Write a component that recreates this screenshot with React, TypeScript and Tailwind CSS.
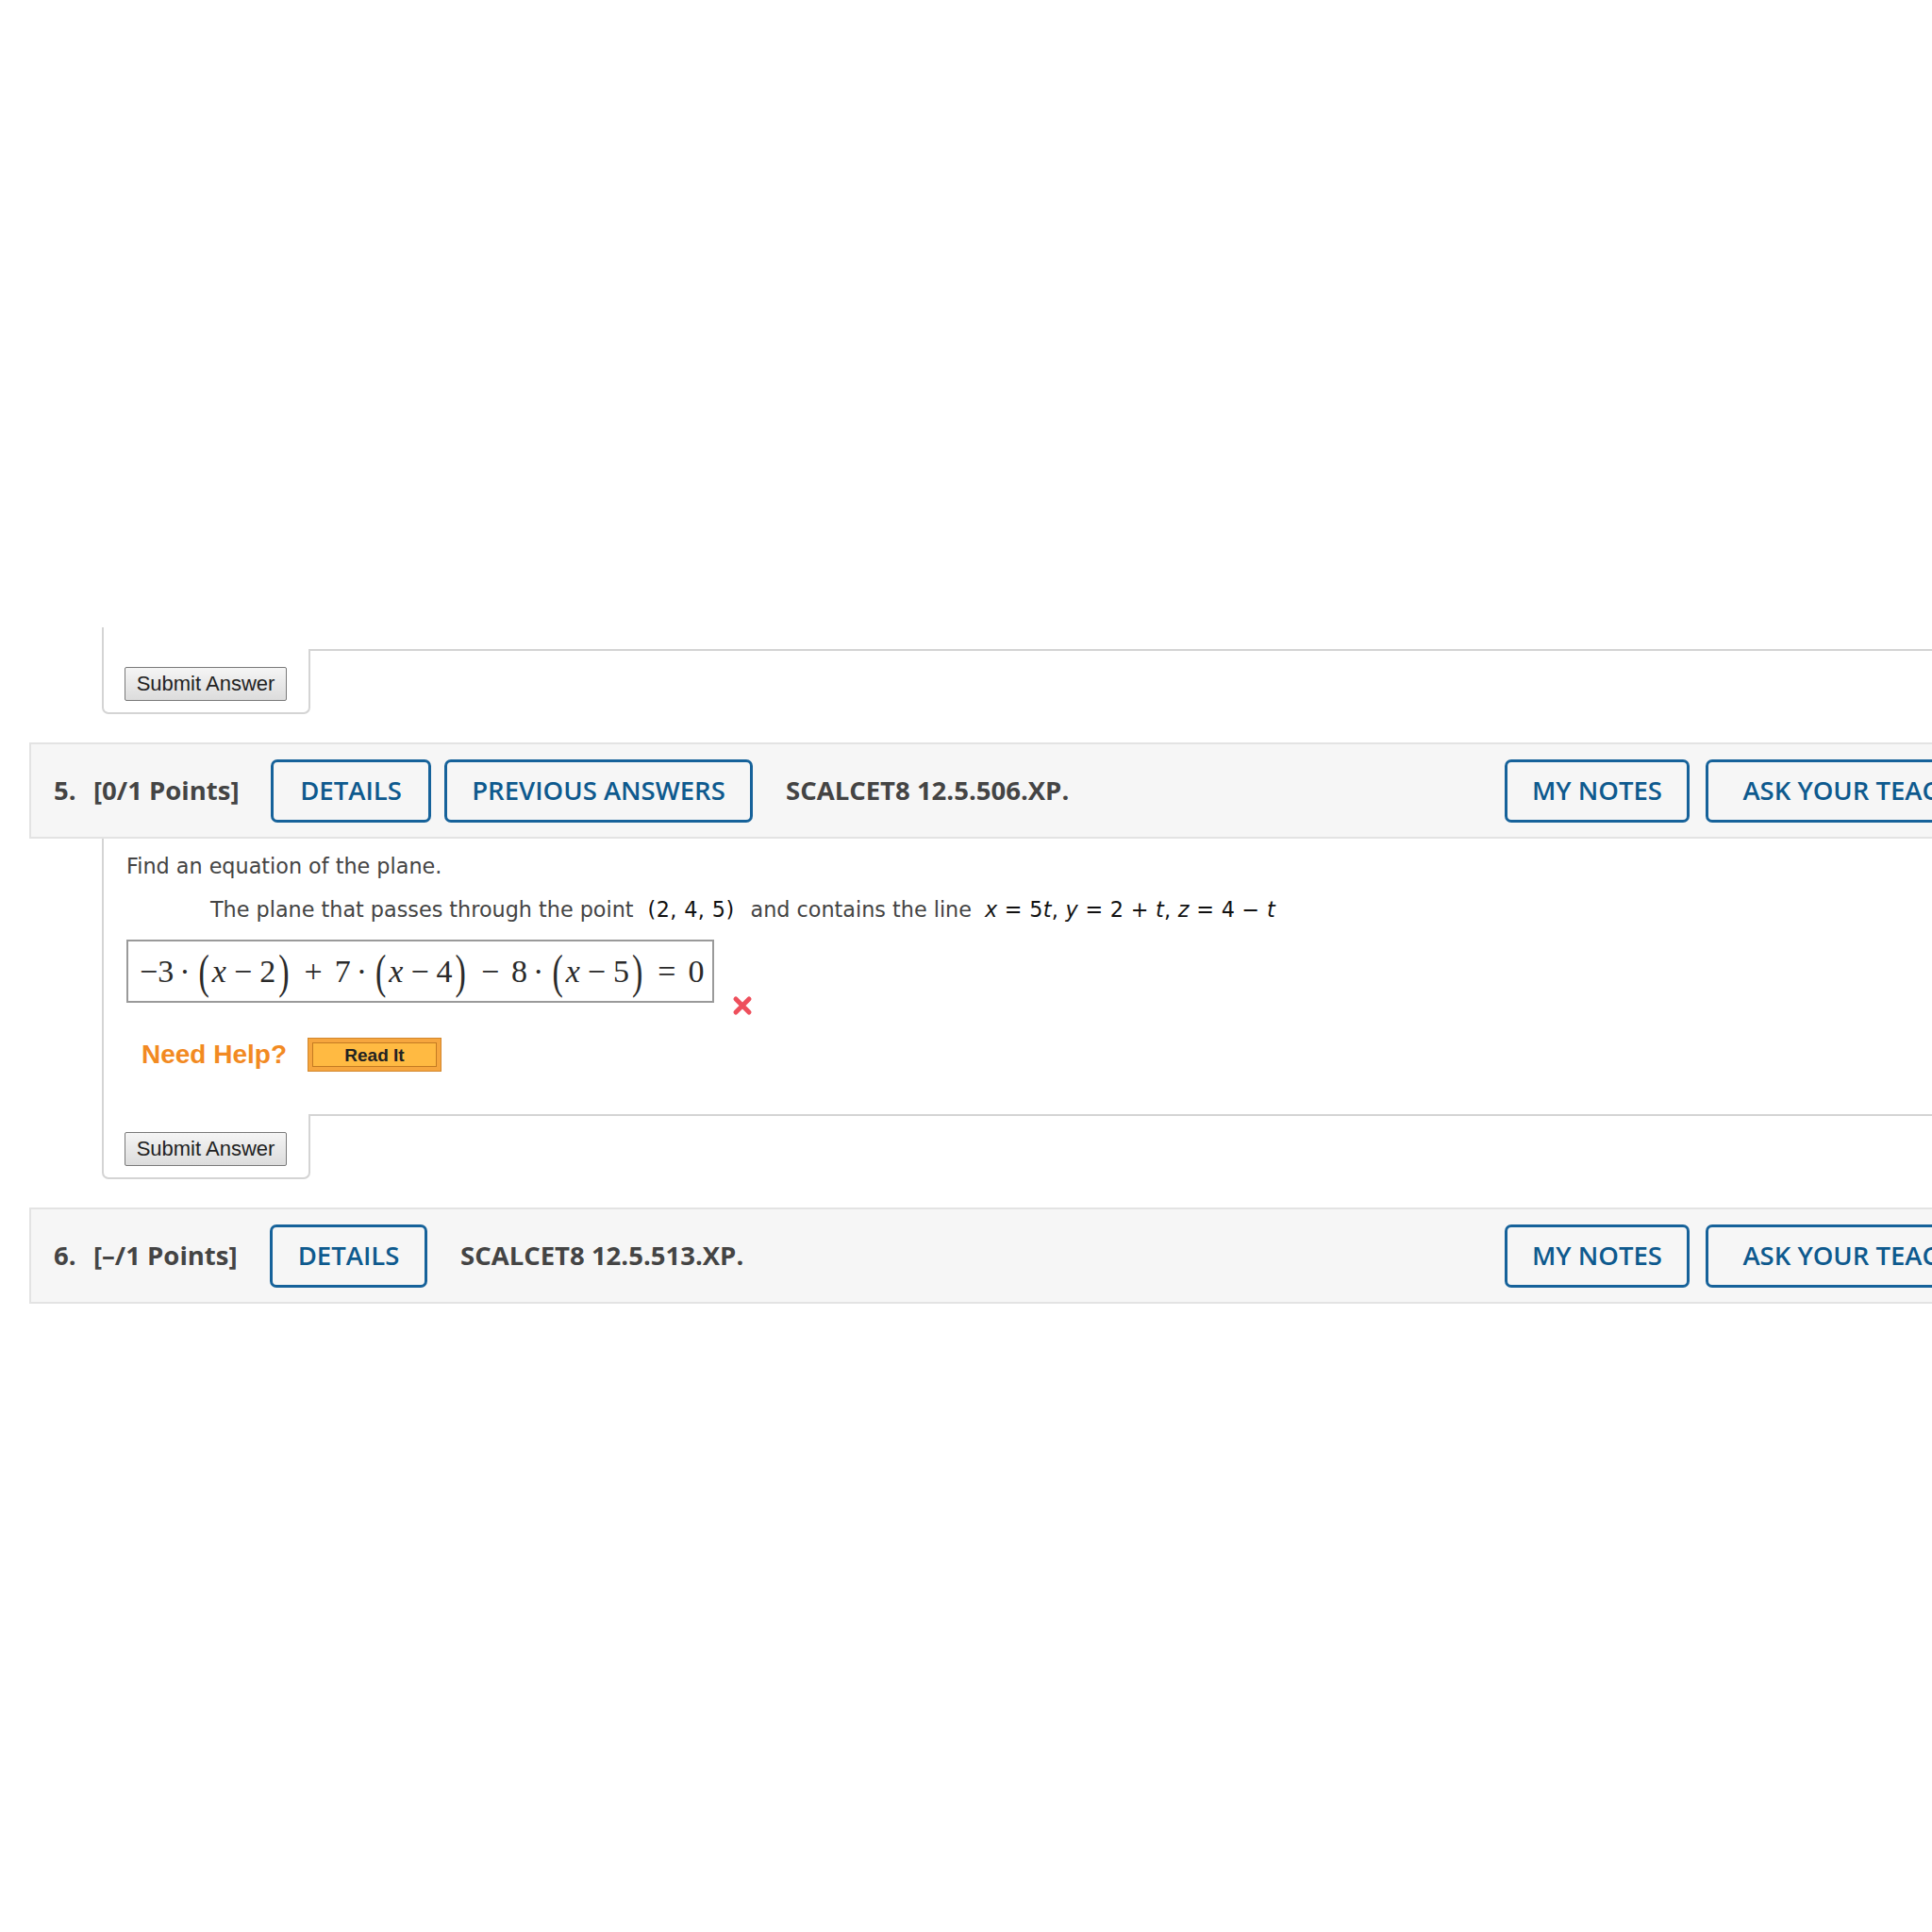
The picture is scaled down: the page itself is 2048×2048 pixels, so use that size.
import React from "react";

const blueBtn =
  "h-[67px] flex items-center justify-center border-[3px] border-[#16629a] rounded-[7px] text-[#0e5a8e] text-[27.5px] font-semibold leading-none whitespace-nowrap";

function SubmitButton() {
  return (
    <div className="w-[172px] h-[36px] flex items-center justify-center border border-[#7a7a7a] rounded-[2px] bg-gradient-to-b from-[#f5f5f5] to-[#dcdcdc] text-[22px] text-[#222] font-['Liberation_Sans',Arial,sans-serif] leading-none">
      Submit Answer
    </div>
  );
}

function Footer() {
  return (
    <div className="flex">
      <div className="w-[221px] h-[69px] shrink-0 border-l-2 border-b-2 border-r-2 border-[#d4d4d4] rounded-b-[7px] pt-[19px] pl-[22px]">
        <SubmitButton />
      </div>
      <div className="flex-1 border-t-2 border-[#d4d4d4]" />
    </div>
  );
}

function Header({
  num,
  points,
  pointsW,
  detailsW,
  prev,
  code,
}: {
  num: string;
  points: string;
  pointsW: string;
  detailsW: string;
  prev?: boolean;
  code: string;
}) {
  return (
    <div className="ml-[31px] w-[2141px] h-[102px] bg-[#f6f6f6] border-2 border-[#e3e3e3] flex items-center pl-[24px] pr-[22px] font-['Open_Sans',sans-serif]">
      <span className="w-[42px] text-[27.5px] font-bold text-[#444]">{num}</span>
      <span className={`${pointsW} text-[27.5px] font-bold text-[#444] whitespace-nowrap`}>
        {points}
      </span>
      <div className={`${blueBtn} ${detailsW}`}>DETAILS</div>
      {prev && <div className={`${blueBtn} w-[327px] ml-[14px]`}>PREVIOUS ANSWERS</div>}
      <span className="ml-[35px] text-[27.5px] font-bold text-[#444] whitespace-nowrap">
        {code}
      </span>
      <div className={`${blueBtn} w-[196px] ml-auto`}>MY NOTES</div>
      <div className={`${blueBtn} w-[340px] ml-[17px]`}>ASK YOUR TEACHER</div>
    </div>
  );
}

function Paren({ c }: { c: string }) {
  return <span className="inline-block scale-y-[1.5] origin-center mx-[3px]">{c}</span>;
}

// binary operators between terms
function Op({ c }: { c: string }) {
  return <span className="mx-[13px]">{c}</span>;
}

function Group({ n }: { n: string }) {
  return (
    <>
      <Paren c="(" />
      <span className="italic">x</span>
      <span className="mx-[8px]">−</span>
      <span>{n}</span>
      <Paren c=")" />
    </>
  );
}

function Dot() {
  return <span className="mx-[6px]">·</span>;
}

export default function App() {
  return (
    <div className="w-full min-h-[2048px] bg-white overflow-hidden">
      <div className="w-[2200px] pt-[665px]">
        {/* tail of question 4 */}
        <div className="ml-[108px]">
          <div className="h-[23px] border-l-2 border-[#d4d4d4]" />
          <Footer />
        </div>

        <div className="mt-[30px]">
          <Header
            num="5."
            points="[0/1 Points]"
            pointsW="w-[188px]"
            detailsW="w-[170px]"
            prev
            code="SCALCET8 12.5.506.XP."
          />
        </div>

        <div className="ml-[108px]">
          <div className="border-l-2 border-[#d4d4d4] pl-[24px] pt-[16px] pb-[45px] font-['DejaVu_Sans',Verdana,sans-serif] text-[22.3px] leading-[26px] text-[#444]">
            <div>Find an equation of the plane.</div>
            <div className="mt-[20px] pl-[89px] whitespace-nowrap">
              The plane that passes through the point
              <span className="ml-[15px] mr-[17px] text-[#111] tracking-[0.4px]">(2, 4, 5)</span>
              and contains the line
              <span className="ml-[14px] text-[#111] tracking-[0.3px]">
                <span className="italic">x</span> = 5<span className="italic">t</span>,{" "}
                <span className="italic">y</span> = 2 + <span className="italic">t</span>,{" "}
                <span className="italic">z</span> = 4 − <span className="italic">t</span>
              </span>
            </div>
            <div className="mt-[19px] flex items-end">
              <div className="w-[623px] h-[67px] border-2 border-[#9a9a9a] flex items-center pl-[12px] font-['Liberation_Serif','Times_New_Roman',serif] text-[34px] text-[#2a2a2a] whitespace-nowrap leading-none">
                <span>−3</span>
                <Dot />
                <Group n="2" />
                <Op c="+" />
                <span>7</span>
                <Dot />
                <Group n="4" />
                <Op c="−" />
                <span>8</span>
                <Dot />
                <Group n="5" />
                <Op c="=" />
                <span>0</span>
              </div>
              <svg width="22" height="22" viewBox="0 0 22 22" className="ml-[19px] mb-[-14px]">
                <path
                  d="M4 4 L18 18 M18 4 L4 18"
                  stroke="#ee4f5c"
                  strokeWidth="5"
                  strokeLinecap="round"
                />
              </svg>
            </div>
            <div className="mt-[37px] flex items-center pl-[16px]">
              <span className="w-[176px] font-['Liberation_Sans',Arial,sans-serif] font-bold text-[28px] text-[#f28a22] leading-none">
                Need Help?
              </span>
              <div className="w-[142px] h-[36px] bg-[#f6a63e] border border-[#d2862c] p-[4px]">
                <div className="w-full h-full bg-[#ffba42] border border-[#c47b22] flex items-center justify-center font-['Liberation_Sans',Arial,sans-serif] font-bold text-[19px] text-[#222] leading-none">
                  Read It
                </div>
              </div>
            </div>
          </div>
          <Footer />
        </div>

        <div className="mt-[30px]">
          <Header
            num="6."
            points="[–/1 Points]"
            pointsW="w-[187px]"
            detailsW="w-[167px]"
            code="SCALCET8 12.5.513.XP."
          />
        </div>
      </div>
    </div>
  );
}
